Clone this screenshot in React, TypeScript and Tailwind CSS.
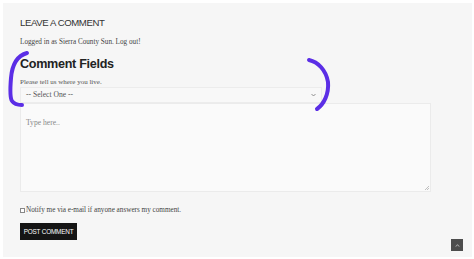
import { FaChevronUp } from "react-icons/fa";

const serif = "font-['Liberation_Serif',serif]";
const sans = "font-['Liberation_Sans',Arial,sans-serif]";

const Marker = () => {
  return (
    <svg className="absolute inset-0 pointer-events-none" width="474" height="259" viewBox="0 0 474 259">
      <path
        d="M27 53 C 16 56, 12 66, 11 78 C 10 90, 10 98, 12 101 C 14 104, 18 105, 22 105"
        fill="none"
        stroke="#5b2ee6"
        strokeWidth="4"
        strokeLinecap="round"
      />
      <path
        d="M309 60 C 318 62, 326 70, 328 82 C 329 94, 324 104, 317 109"
        fill="none"
        stroke="#5b2ee6"
        strokeWidth="4"
        strokeLinecap="round"
      />
    </svg>
  );
};

const App = () => {
  return (
    <div className="relative w-[474px] h-[259px] bg-white pt-[3px] pl-[3px] pr-[2px] pb-[2px]">
      <div className="relative h-full bg-[#f6f6f6] pl-[17px] pr-[38px] pt-[13px]">
        <h3 className={`${sans} text-[9.6px] leading-[14px] text-[#333] tracking-[-0.4px]`}>LEAVE A COMMENT</h3>
        <p className={`${serif} mt-[7px] text-[7.2px] leading-[10px] text-[#444]`}>Logged in as Sierra County Sun. Log out!</p>

        <h2 className={`${sans} mt-[9px] text-[12.6px] leading-[16px] font-bold text-[#222] tracking-[-0.3px]`}>Comment Fields</h2>
        <p className={`${serif} mt-[5px] text-[7px] leading-[10px] text-[#555]`}>Please tell us where you live.</p>

        <div className="mt-0 w-[302px] h-[16px] bg-[#f8f8f8] border border-[#ececec] flex items-center justify-between pl-[5px] pr-[5px]">
          <span className={`${serif} text-[7.6px] text-[#555]`}>-- Select One --</span>
          <svg width="5" height="4" viewBox="0 0 5 4">
            <path d="M0.5 1 L2.5 3 L4.5 1" fill="none" stroke="#777" strokeWidth="0.8" />
          </svg>
        </div>

        <div className="relative w-[411px] h-[89px] bg-[#fafafa] border border-[#ebebeb] pl-[5px] pt-[3px]">
          <span className={`${serif} text-[7.6px] text-[#888]`}>Type here..</span>
          <svg className="absolute right-[1px] bottom-[1px]" width="4" height="4" viewBox="0 0 4 4">
            <path d="M0 4 L4 0 M2 4 L4 2" stroke="#999" strokeWidth="0.6" />
          </svg>
        </div>

        <div className="mt-[13px] flex items-center gap-[1px]">
          <span className="w-[5px] h-[5px] border border-[#888] bg-white" />
          <span className={`${serif} text-[7.2px] leading-[10px] text-[#444]`}>Notify me via e-mail if anyone answers my comment.</span>
        </div>

        <button className={`${sans} mt-[8px] w-[57px] h-[17px] bg-[#151515] text-white text-[6.4px] tracking-[-0.2px] flex items-center justify-center`}>
          POST COMMENT
        </button>

        <div className="absolute right-[9px] bottom-[6px] w-[12px] h-[12px] bg-[#4d4d4d] flex items-center justify-center">
          <FaChevronUp className="text-[#aaa]" size={5} />
        </div>
      </div>
      <Marker />
    </div>
  );
};

export default App;
